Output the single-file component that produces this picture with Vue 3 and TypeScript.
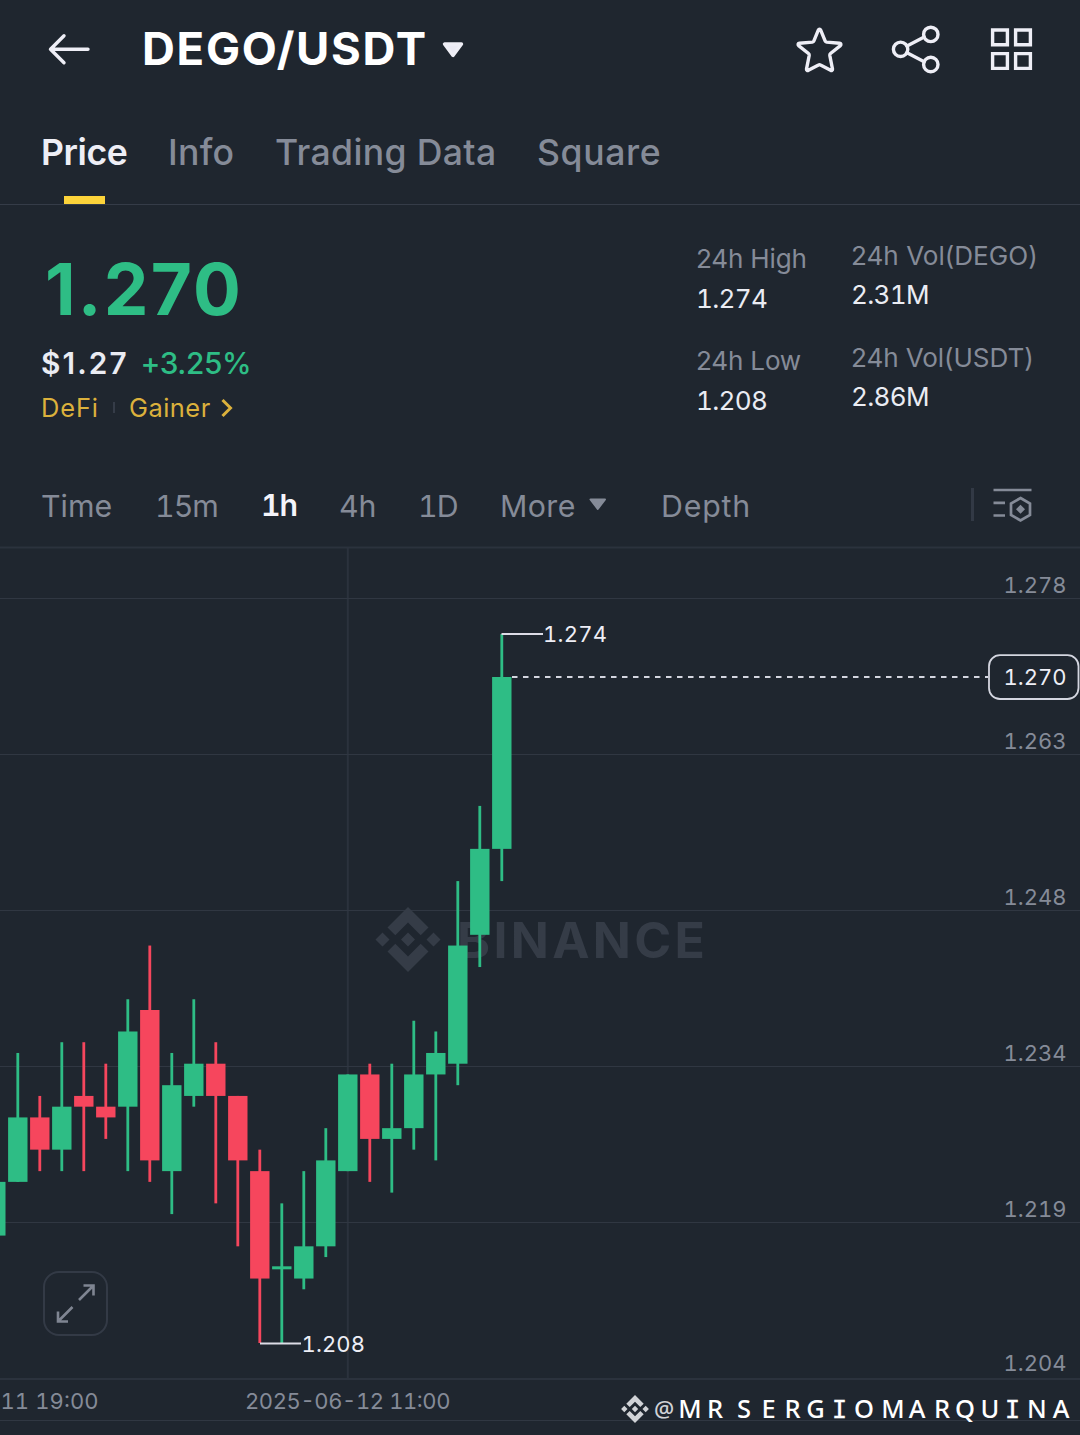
<script setup lang="ts">
interface Candle {
  open: number
  close: number
  high: number
  low: number
}

// Prices are in thousandths of a USDT.
const candles: Candle[] = [
  { open: 1218, close: 1223, high: 1223, low: 1218 },
  { open: 1223, close: 1229, high: 1235, low: 1223 },
  { open: 1229, close: 1226, high: 1231, low: 1224 },
  { open: 1226, close: 1230, high: 1236, low: 1224 },
  { open: 1231, close: 1230, high: 1236, low: 1224 },
  { open: 1230, close: 1229, high: 1234, low: 1227 },
  { open: 1230, close: 1237, high: 1240, low: 1224 },
  { open: 1239, close: 1225, high: 1245, low: 1223 },
  { open: 1224, close: 1232, high: 1235, low: 1220 },
  { open: 1231, close: 1234, high: 1240, low: 1230 },
  { open: 1234, close: 1231, high: 1236, low: 1221 },
  { open: 1231, close: 1225, high: 1231, low: 1217 },
  { open: 1224, close: 1214, high: 1226, low: 1208 },
  { open: 1215, close: 1215, high: 1221, low: 1208 },
  { open: 1214, close: 1217, high: 1224, low: 1213 },
  { open: 1217, close: 1225, high: 1228, low: 1216 },
  { open: 1224, close: 1233, high: 1233, low: 1224 },
  { open: 1233, close: 1227, high: 1234, low: 1223 },
  { open: 1227, close: 1228, high: 1234, low: 1222 },
  { open: 1228, close: 1233, high: 1238, low: 1226 },
  { open: 1233, close: 1235, high: 1237, low: 1225 },
  { open: 1234, close: 1245, high: 1251, low: 1232 },
  { open: 1246, close: 1254, high: 1258, low: 1243 },
  { open: 1254, close: 1270, high: 1274, low: 1251 },
]

const priceY = (p: number): number => 677 + (1270 - p) * 10.742

const bars = candles.map((c, i) => {
  const x = -4.2 + i * 22
  const top = priceY(Math.max(c.open, c.close))
  const flat = c.open === c.close
  return {
    x,
    color: c.close >= c.open ? '#2ebd85' : '#f6465d',
    y: flat ? top - 1.5 : top,
    h: flat ? 3 : Math.abs(c.open - c.close) * 10.742,
    y1: priceY(c.high),
    y2: priceY(c.low),
  }
})

const axis = [
  { label: '1.278', line: 598.5, base: 593.3 },
  { label: '1.263', line: 754.5, base: 749.3 },
  { label: '1.248', line: 910.5, base: 905.3 },
  { label: '1.234', line: 1066.5, base: 1061.3 },
  { label: '1.219', line: 1222.5, base: 1217.3 },
  { label: '1.204', line: 1379, base: 1371.3 },
]

const tabs = ['Price', 'Info', 'Trading Data', 'Square']

const stats = [
  [
    { label: '24h High', value: '1.274' },
    { label: '24h Low', value: '1.208' },
  ],
  [
    { label: '24h Vol(DEGO)', value: '2.31M' },
    { label: '24h Vol(USDT)', value: '2.86M' },
  ],
]

const handle = [...'@MRSERGIOMARQUINA']
const handleX = [664, 690, 715, 744, 768.5, 792.5, 815.5, 839.5, 864, 893, 917, 942, 965, 990, 1012.5, 1037, 1061]
</script>

<template>
  <div class="screen">
    <header class="header">
      <svg class="back" width="46" height="36" viewBox="0 0 46 36">
        <path d="M42 18.300H5M18 4.800 4.500 18.300 18 31.800" />
      </svg>
      <h1>DEGO/USDT</h1>
      <svg class="caret" width="22" height="16" viewBox="0 0 22 16">
        <path d="M2.500 2h17L11 13.500z" />
      </svg>
      <div class="actions">
        <svg width="50" height="50" viewBox="0 0 50 50">
          <path d="M24.500 5.300c.6 0 1 .4 1.300 1l4.300 10.600c.3.700.9 1.100 1.600 1.200l12.900 1.100c1.300.1 1.800 1.600.8 2.400L35.500 29.500c-.6.500-.8 1.200-.7 2l2.700 13.500c.2 1.200-.9 1.900-1.900 1.300L25.500 41c-.7-.4-1.300-.4-2 0l-10.100 5.300c-1 .6-2.100-.1-1.900-1.300L14.200 31.500c.1-.8-.1-1.500-.7-2l-9.900-7.900c-1-.8-.5-2.300.8-2.400l12.900-1.100c.7-.1 1.300-.5 1.600-1.200L23.200 6.300c.3-.6.700-1 1.300-1z" />
        </svg>
        <svg width="50" height="50" viewBox="0 0 50 50">
          <circle cx="9.600" cy="25.300" r="7.200" />
          <circle cx="39.800" cy="10.400" r="7.200" />
          <circle cx="39.800" cy="40.500" r="7.200" />
          <path d="M16 22 33.200 13M16 28.800 33.200 37.800" />
        </svg>
        <svg width="50" height="50" viewBox="0 0 50 50">
          <path d="M5.600 6h14.800v14.800H5.600zM28.600 6h14.800v14.800H28.600zM5.600 29.600h14.800v14.800H5.600zM28.600 29.600h14.800v14.800H28.600z" />
        </svg>
      </div>
    </header>

    <nav class="tabs">
      <span v-for="(t, i) in tabs" :key="t" :class="['tab', 'tab' + i, { active: i === 0 }]">{{ t }}</span>
    </nav>

    <section class="summary">
      <div class="quote">
        <div class="last">1.270</div>
        <div class="fiat"><span class="usd">$1.27</span><span class="change">+3.25%</span></div>
        <div class="tags">
          <span class="defi">DeFi</span><i class="sep"></i><span>Gainer</span>
          <svg width="14" height="22" viewBox="0 0 14 22"><path d="M2.500 3 10.500 11l-8 8" /></svg>
        </div>
      </div>
      <div v-for="(col, i) in stats" :key="i" :class="['stats', 'col' + i]">
        <div v-for="s in col" :key="s.label" class="stat">
          <div class="label">{{ s.label }}</div>
          <div class="value">{{ s.value }}</div>
        </div>
      </div>
    </section>

    <nav class="intervals">
      <span>Time</span>
      <span class="tn">15m</span>
      <span class="tn on">1h</span>
      <span>4h</span>
      <span class="tn">1D</span>
      <span class="more">More
        <svg width="20" height="16" viewBox="0 0 20 16"><path d="M2.500 2.500h14.500L9.750 12z" /></svg>
      </span>
      <span class="depth">Depth</span>
      <i class="bar"></i>
      <svg class="settings" width="42" height="36" viewBox="0 0 42 36">
        <path d="M.5 3h38M.5 15.800H12M.5 28.500H12" />
        <path d="M27.500 11 37 16.500v11.500l-9.500 5.500L18 28V16.500z" />
        <path class="dot" d="M27.500 17.800l4.500 4.500-4.500 4.500-4.500-4.500z" />
      </svg>
    </nav>

    <main class="chart">
      <svg class="plot" width="1080" height="889" viewBox="0 546 1080 889">
        <path class="edge" d="M0 547.500H1080M347.800 547.500V1379M0 1379H1080" />
        <path class="grid" d="M0 1420.500H1080" />
        <line v-for="a in axis.slice(0, 5)" :key="a.label" class="grid" x1="0" x2="1080" :y1="a.line" :y2="a.line" />
        <g class="mark">
          <path d="M408 907 428.500 927.500 420.700 935.300 408 922.600 395.300 935.300 387.500 927.500z" />
          <path d="M408 972 428.500 951.500 420.700 943.700 408 956.400 395.300 943.700 387.500 951.500z" />
          <path d="M408 932.500l7 7-7 7-7-7zM382.500 932.500l7 7-7 7-7-7zM433.500 932.500l7 7-7 7-7-7z" />
          <text x="457" y="957.500">BINANCE</text>
        </g>
        <g v-for="b in bars" :key="b.x" :fill="b.color">
          <rect :x="b.x - 1.400" :y="b.y1" width="2.800" :height="b.y2 - b.y1" />
          <rect :x="b.x - 9.700" :y="b.y" width="19.400" :height="b.h" />
        </g>
        <text v-for="a in axis" :key="a.label" class="tick" x="1003.500" :y="a.base" textLength="63">{{ a.label }}</text>
        <path class="leader" d="M501.500 634H543M260 1343.500H301" />
        <text class="tick lit" x="543" y="642.300" textLength="64">1.274</text>
        <text class="tick lit" x="301.500" y="1352.300" textLength="63.500">1.208</text>
        <path class="dash" d="M512 677H988" />
        <rect class="tag" x="989" y="655.200" width="89.500" height="43.800" rx="11" />
        <text class="tick lit" x="1003.500" y="685.300" textLength="63">1.270</text>
        <text class="tick" x="0.500" y="1409.300" textLength="98">11 19:00</text>
        <text class="tick" x="245" y="1409.300" textLength="205.500">2025-06-12 11:00</text>
      </svg>

      <button class="expand" aria-label="Expand">
        <svg width="65" height="65" viewBox="0 0 65 65">
          <path d="M36 29 50 15M40.500 14.500H50.500V24.500M29.500 36 15.500 50M15 40.500V50.500H25" />
        </svg>
      </button>

      <svg class="handle" width="460" height="40" viewBox="620 1389 460 40">
        <g class="logo">
          <path d="M635 1395 643.700 1403.700 640.300 1407 635 1401.800 629.700 1407 626.300 1403.700z" />
          <path d="M635 1423 643.700 1414.300 640.300 1411 635 1416.200 629.700 1411 626.300 1414.300z" />
          <path d="M635 1405.800l3.200 3.200-3.200 3.200-3.200-3.200zM624.300 1405.800l3.200 3.200-3.200 3.200-3.200-3.200zM645.700 1405.800l3.200 3.200-3.200 3.200-3.200-3.200z" />
        </g>
        <text
          v-for="(ch, i) in handle"
          :key="i"
          :class="{ slab: ch === 'I', at: ch === '@' }"
          :x="handleX[i]"
          :y="ch === '@' ? 1416.5 : 1418"
        >{{ ch }}</text>
      </svg>
    </main>
  </div>
</template>

<style>
body {
  background: #1f262f;
}
</style>

<style scoped>
.screen {
  width: 1080px;
  height: 1435px;
  overflow: hidden;
  background: #1f262f;
  color: #eaecf3;
  font-family: Inter, sans-serif;
}
.header {
  display: flex;
  align-items: center;
  height: 98px;
  padding: 0 43px 0 46px;
}
.header svg {
  flex: none;
  fill: none;
  stroke: #eeeef6;
  stroke-width: 3.4;
  stroke-linecap: round;
  stroke-linejoin: round;
}
h1 {
  width: 286px;
  margin: 0 0 0 50px;
  font-size: 45.5px;
  font-weight: 700;
  letter-spacing: 1.7px;
  line-height: 98px;
  color: #fff;
  white-space: nowrap;
}
.header .caret {
  margin: 2px 0 0 14px;
  fill: #eaeaf4;
}
.actions {
  display: flex;
  gap: 46px;
  margin-left: auto;
}
.actions svg:last-child {
  stroke-linejoin: miter;
}
.tabs {
  display: grid;
  grid-template-columns: 127px 107px 262px 1fr;
  height: 106px;
  padding-left: 41px;
  border-bottom: 1px solid #353c48;
  font-size: 35.6px;
  font-weight: 500;
  line-height: 110px;
  color: #858b98;
}
.tab {
  position: relative;
  white-space: nowrap;
}
.tab1 { letter-spacing: 0.3px; }
.tab2 { letter-spacing: 0.35px; }
.tab3 { letter-spacing: 0.6px; }
.tab.active {
  color: #eeeef6;
  font-weight: 600;
  letter-spacing: -0.4px;
}
.tab.active::after {
  content: '';
  position: absolute;
  left: 23px;
  bottom: 4px;
  width: 41px;
  height: 8px;
  background: #fcd33a;
}
.summary {
  display: flex;
  height: 260px;
}
.quote {
  width: 655px;
  padding: 42px 0 0 41px;
}
.last {
  height: 84px;
  padding-left: 4px;
  font-size: 71px;
  font-weight: 700;
  letter-spacing: 2.2px;
  line-height: 84px;
  color: #2ebd85;
}
.fiat {
  display: flex;
  margin-top: 9px;
  font-size: 29.8px;
  line-height: 46px;
}
.usd {
  width: 99.5px;
  font-weight: 600;
  letter-spacing: 2.1px;
}
.change {
  color: #2ebd85;
  font-weight: 500;
  letter-spacing: -0.4px;
}
.tags {
  display: flex;
  align-items: center;
  font-size: 25.4px;
  line-height: 43px;
  letter-spacing: 0.5px;
  color: #dcb13c;
}
.defi {
  width: 59px;
  letter-spacing: 0.9px;
}
.sep {
  width: 2px;
  height: 11px;
  margin: 0 14.5px 0 12.5px;
  background: #353c48;
}
.tags svg {
  margin-left: 9px;
  fill: none;
  stroke: #dcb13c;
  stroke-width: 3;
}
.stats {
  display: flex;
  flex-direction: column;
  gap: 22px;
  width: 155px;
  padding-top: 34px;
  font-size: 26.1px;
  line-height: 40px;
  white-space: nowrap;
}
.col1 {
  width: auto;
  padding-top: 31px;
}
.col1 .value {
  margin-top: -1px;
}
.col1 .stat + .stat {
  margin-top: 0.5px;
}
.label {
  letter-spacing: 0;
  color: #858b98;
}
.col1 .stat + .stat .label {
  letter-spacing: -0.1px;
}
.col0 .label {
  letter-spacing: -0.2px;
}
.value {
  font-variant-numeric: tabular-nums;
  letter-spacing: -0.7px;
}
.intervals {
  display: grid;
  grid-template-columns: 114px 106px 78px 79px 82px 161px 310px 22px 1fr;
  align-items: center;
  height: 81px;
  padding-left: 41px;
  font-size: 30.3px;
  line-height: 82px;
  color: #858b98;
  white-space: nowrap;
}
.tn {
  font-variant-numeric: tabular-nums;
  letter-spacing: -1px;
}
.on {
  position: relative;
  top: -1px;
  color: #f4f4fa;
  font-weight: 600;
}
.more {
  letter-spacing: 0.4px;
}
.more svg {
  margin: 0 0 4px 3px;
  fill: #858b98;
  stroke: #858b98;
  stroke-width: 2;
  stroke-linejoin: round;
}
.depth {
  letter-spacing: 0.8px;
}
.bar {
  width: 2.500px;
  height: 33px;
  margin-top: -3px;
  background: #323945;
}
.settings {
  margin-top: -3px;
  fill: none;
  stroke: #858b98;
  stroke-width: 2.7;
}
.settings .dot {
  fill: #858b98;
  stroke: none;
}
.chart {
  position: relative;
}
.plot {
  display: block;
}
.grid {
  stroke: #303742;
  stroke-width: 1.2;
}
.edge {
  fill: none;
  stroke: #2b323d;
  stroke-width: 2;
}
.mark {
  fill: #353c47;
}
.mark text {
  font-size: 50px;
  font-weight: 700;
  letter-spacing: 3.3px;
}
.tick {
  fill: #858b98;
  font-size: 22px;
  font-variant-numeric: tabular-nums;
}
.lit {
  fill: #eeeef6;
}
.leader {
  fill: none;
  stroke: #dcdce6;
  stroke-width: 1.8;
}
.dash {
  stroke: #d4d6e0;
  stroke-width: 2;
  stroke-dasharray: 5.500 5.500;
}
.tag {
  fill: #1f262f;
  stroke: #d4d6e0;
  stroke-width: 1.800;
}
.expand {
  position: absolute;
  left: 43px;
  top: 725px;
  width: 65px;
  height: 65px;
  padding: 0;
  border: 2px solid #333a46;
  border-radius: 16px;
  background: none;
}
.expand svg {
  display: block;
  margin: -2px;
  fill: none;
  stroke: #7f8592;
  stroke-width: 2.6;
}
.handle {
  position: absolute;
  left: 620px;
  top: 843px;
}
.handle text {
  fill: #fff;
  font-family: 'Noto Sans', sans-serif;
  font-size: 25.5px;
  font-weight: 500;
  text-anchor: middle;
}
.handle .slab {
  font-family: 'DejaVu Sans Mono', monospace;
  font-size: 25px;
  stroke: #fff;
  stroke-width: 0.4;
}
.handle .at {
  fill: #d0d2d6;
  font-size: 22.5px;
}
.logo {
  fill: #d0d2d6;
}
</style>
